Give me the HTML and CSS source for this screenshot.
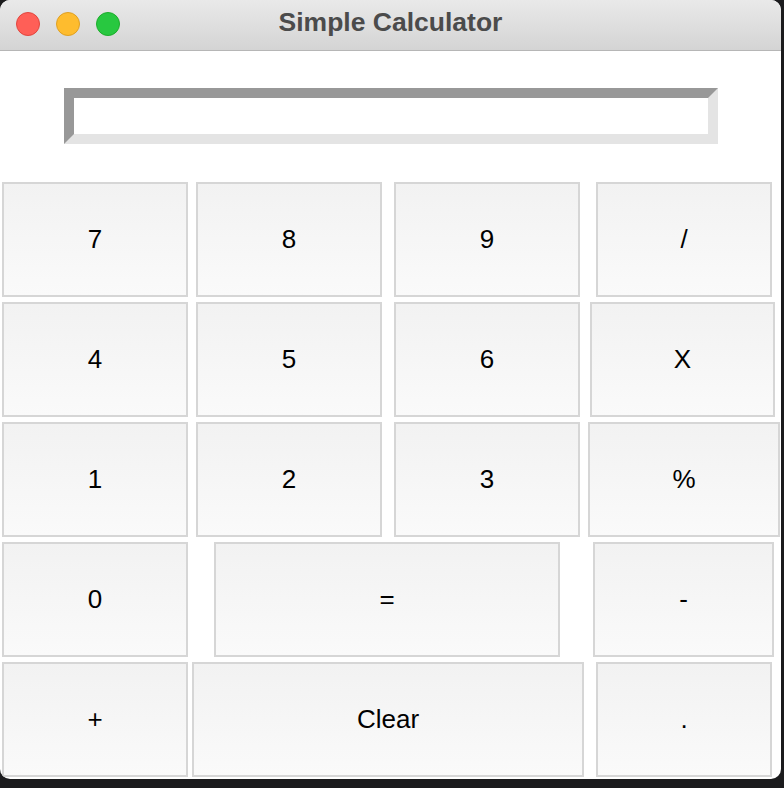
FILE: index.html
```html
<!DOCTYPE html>
<html>
<head>
<meta charset="utf-8">
<title>Simple Calculator</title>
<link rel="stylesheet" href="styles.css">
</head>
<body>
<div class="window">
  <div class="titlebar">
    <div class="lights">
      <span class="light red"></span>
      <span class="light yellow"></span>
      <span class="light green"></span>
    </div>
    <div class="title">Simple Calculator</div>
    <div class="spacer"></div>
  </div>
  <div class="content">
    <div class="display-wrap">
      <input class="display" type="text" value="">
    </div>
    <div class="keys">
      <div class="row r1">
        <button class="key">7</button>
        <button class="key">8</button>
        <button class="key">9</button>
        <button class="key">/</button>
      </div>
      <div class="row r2">
        <button class="key">4</button>
        <button class="key">5</button>
        <button class="key">6</button>
        <button class="key">X</button>
      </div>
      <div class="row r3">
        <button class="key">1</button>
        <button class="key">2</button>
        <button class="key">3</button>
        <button class="key">%</button>
      </div>
      <div class="row r4">
        <button class="key">0</button>
        <button class="key">=</button>
        <button class="key">-</button>
      </div>
      <div class="row r5">
        <button class="key">+</button>
        <button class="key">Clear</button>
        <button class="key">.</button>
      </div>
    </div>
  </div>
</div>
</body>
</html>
```

FILE: styles.css
```css
html, body {
  margin: 0;
  padding: 0;
  background: #1b1b1d;
}

body {
  width: 784px;
  height: 788px;
  overflow: hidden;
  font-family: "Liberation Sans", Arial, sans-serif;
}

.window {
  width: 781px;
  height: 779px;
  border-radius: 10px;
  overflow: hidden;
  background: #ffffff;
}

.titlebar {
  height: 50px;
  box-sizing: border-box;
  padding-bottom: 3px;
  border-bottom: 1px solid #b6b6b6;
  background: linear-gradient(#e9e9e9, #d4d4d4);
  display: grid;
  grid-template-columns: 1fr auto 1fr;
  align-items: center;
  height: 51px;
}

.lights {
  display: flex;
  gap: 16px;
  padding-left: 16px;
}

.light {
  width: 24px;
  height: 24px;
  box-sizing: border-box;
  border-radius: 50%;
  border: 1px solid;
}

.red { background: #ff5f57; border-color: #e1463e; }
.yellow { background: #febc2e; border-color: #dfa023; }
.green { background: #28c840; border-color: #1dad2b; }

.title {
  font-weight: bold;
  font-size: 26.5px;
  color: #4b4b4b;
  margin-top: -2px;
}

.content {
  padding-top: 37px;
}

.display-wrap {
  padding-left: 64px;
}

.display {
  display: block;
  width: 654px;
  height: 56px;
  box-sizing: border-box;
  margin: 0;
  padding: 0 4px;
  border-style: solid;
  border-width: 10px;
  border-color: #989898 #e4e4e4 #e4e4e4 #989898;
  background: #ffffff;
  outline: none;
  font-family: "Liberation Sans", Arial, sans-serif;
  font-size: 20px;
}

.keys {
  padding-top: 38px;
  padding-left: 2px;
  display: flex;
  flex-direction: column;
  gap: 5px;
}

.row {
  display: flex;
  height: 115px;
}

.key {
  height: 115px;
  width: 186px;
  box-sizing: border-box;
  margin: 0;
  padding: 0;
  border: 2px solid #d6d6d6;
  background: linear-gradient(#f2f2f2, #fafafa);
  color: #000000;
  font-family: "Liberation Sans", Arial, sans-serif;
  font-size: 26px;
  display: flex;
  align-items: center;
  justify-content: center;
}

.row .key:nth-child(2) { margin-left: 8px; }
.row .key:nth-child(3) { margin-left: 12px; }

.r1 .key:nth-child(4) { margin-left: 16px; width: 176px; }
.r2 .key:nth-child(4) { margin-left: 10px; width: 185px; }
.r3 .key:nth-child(4) { margin-left: 8px; width: 192px; }

.r4 .key:nth-child(2) { margin-left: 26px; width: 346px; }
.r4 .key:nth-child(3) { margin-left: 33px; width: 181px; }

.r5 .key:nth-child(2) { margin-left: 4px; width: 392px; }
.r5 .key:nth-child(3) { margin-left: 12px; width: 176px; }
```
